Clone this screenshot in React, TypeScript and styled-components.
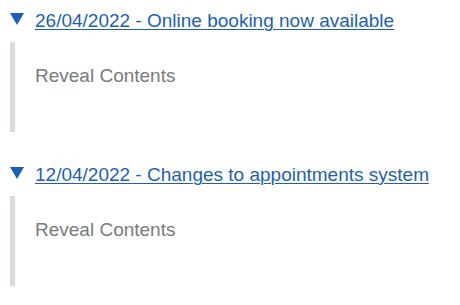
import styled, { createGlobalStyle } from 'styled-components';

const GlobalStyle = createGlobalStyle`
  html, body {
    margin: 0;
    padding: 0;
    background: #fff;
  }
  body {
    font-family: 'Liberation Sans', Arial, sans-serif;
  }
`;

const Page = styled.div`
  padding: 8px 10px 0;
`;

const Details = styled.div`
  margin-bottom: 30px;
`;

const Summary = styled.div`
  display: flex;
  align-items: flex-start;
  margin-bottom: 9px;
  font-size: 19px;
  line-height: 25px;
`;

const Marker = styled.svg`
  flex: none;
  width: 14px;
  height: 12px;
  margin-top: 5px;
  margin-right: 11px;
`;

const SummaryLink = styled.a`
  color: #1d5fb8;
  text-decoration: underline;
  text-decoration-thickness: 1px;
  text-underline-offset: 2px;
  cursor: pointer;
`;

const Body = styled.div`
  border-left: 5px solid #d8dbdc;
  padding: 21px 20px 44px;
  font-size: 19px;
  line-height: 25px;
  color: #767b7e;
`;

const items = [
  '26/04/2022 - Online booking now available',
  '12/04/2022 - Changes to appointments system',
];

export default function App() {
  return (
    <>
      <GlobalStyle />
      <Page>
        {items.map((title) => (
          <Details key={title}>
            <Summary>
              <Marker viewBox="0 0 14 12">
                <polygon points="0,0 14,0 7,12" fill="#1d5fb8" />
              </Marker>
              <SummaryLink>{title}</SummaryLink>
            </Summary>
            <Body>Reveal Contents</Body>
          </Details>
        ))}
      </Page>
    </>
  );
}
